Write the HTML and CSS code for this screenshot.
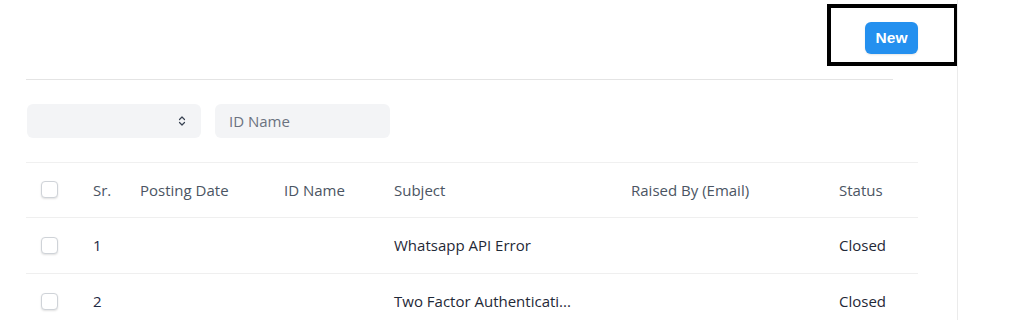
FILE: index.html
```html
<!DOCTYPE html>
<html>
<head>
<meta charset="utf-8">
<link rel="stylesheet" href="styles.css">
</head>
<body>
<div class="page">
  <div class="topbar">
    <div class="highlight">
      <button class="btn-new">New</button>
    </div>
  </div>
  <div class="rule"></div>
  <div class="filters">
    <div class="select">
      <svg class="chev" width="10" height="12" viewBox="0 0 10 12"><path d="M2.5 4.5 L5 2 L7.5 4.5 M2.5 7.5 L5 10 L7.5 7.5" fill="none" stroke="#374151" stroke-width="1.2" stroke-linecap="round" stroke-linejoin="round"/></svg>
    </div>
    <div class="input">ID Name</div>
  </div>
  <div class="table">
    <div class="row head">
      <div class="cell"><span class="cb"></span></div>
      <div class="cell">Sr.</div>
      <div class="cell">Posting Date</div>
      <div class="cell">ID Name</div>
      <div class="cell">Subject</div>
      <div class="cell">Raised By (Email)</div>
      <div class="cell">Status</div>
    </div>
    <div class="row">
      <div class="cell"><span class="cb"></span></div>
      <div class="cell num">1</div>
      <div class="cell"></div>
      <div class="cell"></div>
      <div class="cell">Whatsapp API Error</div>
      <div class="cell"></div>
      <div class="cell">Closed</div>
    </div>
    <div class="row">
      <div class="cell"><span class="cb"></span></div>
      <div class="cell num">2</div>
      <div class="cell"></div>
      <div class="cell"></div>
      <div class="cell">Two Factor Authenticati...</div>
      <div class="cell"></div>
      <div class="cell">Closed</div>
    </div>
  </div>
</div>
</body>
</html>
```
FILE: styles.css
```css
* { box-sizing: border-box; }
html, body { margin: 0; padding: 0; background: #fff; }
body { font-family: "Open Sans", "Noto Sans", sans-serif; font-size: 15px; color: #1f2937; }
.page { width: 958px; height: 320px; border-right: 1px solid #ebebeb; overflow: hidden; }
.topbar { height: 79px; padding-top: 4px; display: flex; justify-content: flex-end; align-items: flex-start; }
.highlight { width: 131px; height: 62px; border: 4px solid #000; padding: 14px 36px 8px 34px; margin-right: -1px; }
.btn-new { width: 53px; height: 32px; border: 0; border-radius: 6px; background: #2490ef; color: #fff; font-family: "Liberation Sans", Arial, sans-serif; font-weight: bold; font-size: 15.5px; padding: 0; box-shadow: 0 1px 2px rgba(0,0,0,0.1); }
.rule { margin-left: 26px; width: 867px; height: 1px; background: #e4e4e4; }
.filters { display: flex; gap: 14px; margin: 24px 0 24px 27px; }
.select { width: 174px; height: 34px; background: #f3f4f6; border-radius: 6px; display: flex; align-items: center; justify-content: flex-end; padding-right: 14px; }
.input { width: 175px; height: 34px; background: #f3f4f6; border-radius: 6px; display: flex; align-items: center; padding-left: 14px; color: #6b7280; font-size: 15px; padding-bottom: 1px; }
.table { margin-left: 26px; width: 892px; border-top: 1px solid #f0f0f0; }
.row { display: grid; grid-template-columns: 52px 47px 144px 110px 237px 208px 79px; padding-left: 15px; height: 56px; align-items: center; border-bottom: 1px solid #efefef; padding-bottom: 1px; }
.row.head { height: 55px; color: #4b5563; }
.cell { white-space: nowrap; font-size: 15px; font-weight: 400; }
.num { color: #1f2a44; }
.cb { display: block; width: 17px; height: 17px; border: 1px solid #cfd3d8; border-radius: 4px; background: #fff; box-shadow: 0 1px 2px rgba(0,0,0,0.12); }
```
